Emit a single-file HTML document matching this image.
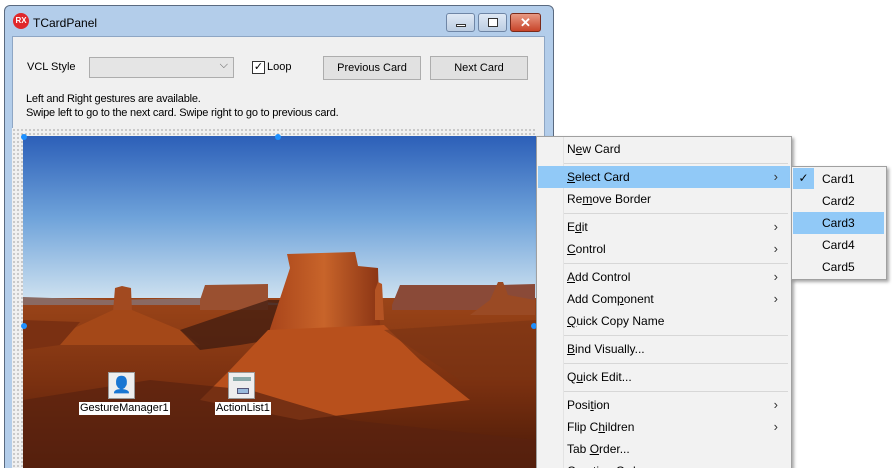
<!DOCTYPE html>
<html><head><meta charset="utf-8"><style>
*{margin:0;padding:0;box-sizing:border-box}
html,body{width:892px;height:468px;overflow:hidden}
body{background:#fff;font-family:"Liberation Sans",sans-serif;font-size:11px;color:#000;position:relative}
.abs{position:absolute}
.win{left:4px;top:5px;width:550px;height:470px;background:#b3cdea;border:1px solid #5a6a80;border-radius:6px 6px 0 0}
.title{left:33px;top:16px;font-size:12px;color:#000}
.client{left:12px;top:36px;width:533px;height:440px;background:#f0f0f0;border:1px solid #8ea6c4}
.btn{border:1px solid #adadad;background:#e1e1e1;text-align:center;line-height:22px;font-size:11px}
.menu{left:536px;top:136px;width:256px;height:340px;background:#f2f2f2;border:1px solid #a0a0a0;box-shadow:2px 2px 3px rgba(0,0,0,.35);font-size:12px}
.mi{position:absolute;left:30px;font-size:12px;height:22px;line-height:22px}
.sep{position:absolute;left:27px;right:3px;height:1px;background:#d7d7d7}
.arr{position:absolute;right:13px;font-size:13px;color:#333;line-height:22px}
.sub{left:791px;top:166px;width:96px;height:114px;background:#f2f2f2;border:1px solid #a0a0a0;box-shadow:2px 2px 3px rgba(0,0,0,.35)}
u{text-decoration:underline}
.lbl{background:#fff;font-size:11px;line-height:13px;padding:0 1px}
</style></head><body>
<div class="abs win"></div>
<div class="abs" style="left:13px;top:13px;width:16px;height:16px;border-radius:50%;background:#e0282b;color:#fff;font-size:8px;font-weight:bold;line-height:16px;text-align:center">RX</div>
<div class="abs title">TCardPanel</div>
<div class="abs" style="left:446px;top:13px;width:29px;height:19px;border:1px solid #6f86a6;border-radius:3px;background:linear-gradient(#dfe9f5,#bccde2)"><div class="abs" style="left:9px;top:10px;width:10px;height:3px;border:1px solid #333;background:#fff"></div></div>
<div class="abs" style="left:478px;top:13px;width:29px;height:19px;border:1px solid #6f86a6;border-radius:3px;background:linear-gradient(#dfe9f5,#bccde2)"><div class="abs" style="left:9px;top:4px;width:10px;height:9px;border:1px solid #333;background:#fff"></div></div>
<div class="abs" style="left:510px;top:13px;width:31px;height:19px;border:1px solid #7a2a1a;border-radius:3px;background:linear-gradient(#e89a84,#c8452a);color:#fff;font-weight:bold;font-size:13px;text-align:center;line-height:17px">✕</div>
<div class="abs client"></div>
<div class="abs" style="left:27px;top:61px">VCL Style</div>
<div class="abs" style="left:89px;top:57px;width:145px;height:21px;border:1px solid #adadad;background:#e5e5e5"><span class="abs" style="right:5px;top:1px;font-size:11px;color:#555">⌵</span></div>
<div class="abs" style="left:252px;top:61px;width:13px;height:13px;border:1px solid #333;background:#fff;font-size:11px;line-height:11px;text-align:center">✓</div>
<div class="abs" style="left:267px;top:61px">Loop</div>
<div class="abs btn" style="left:323px;top:56px;width:98px;height:24px">Previous Card</div>
<div class="abs btn" style="left:430px;top:56px;width:98px;height:24px">Next Card</div>
<div class="abs" style="left:26px;top:92px;line-height:14px;letter-spacing:-0.2px">Left and Right gestures are available.<br>Swipe left to go to the next card. Swipe right to go to previous card.</div>
<div class="abs" style="left:12px;top:128px;width:525px;height:340px;background-image:radial-gradient(#555 0.6px,transparent 0.7px);background-size:4px 4px;background-color:#f0f0f0"></div>
<svg class="abs" style="left:0;top:0" width="892" height="468">
<defs>
<linearGradient id="sky" x1="0" y1="136" x2="0" y2="300" gradientUnits="userSpaceOnUse"><stop offset="0" stop-color="#2c5fb8"/><stop offset=".5" stop-color="#6fa3da"/><stop offset="1" stop-color="#cfe2f0"/></linearGradient>
<linearGradient id="gr" x1="0" y1="300" x2="0" y2="468" gradientUnits="userSpaceOnUse"><stop offset="0" stop-color="#9a4418"/><stop offset=".5" stop-color="#7a3010"/><stop offset="1" stop-color="#4a1a08"/></linearGradient>
<linearGradient id="mesa" x1="0" y1="0" x2="1" y2="0"><stop offset="0" stop-color="#a8441a"/><stop offset=".5" stop-color="#c8642a"/><stop offset="1" stop-color="#8a3414"/></linearGradient>
</defs>
<rect x="23" y="136" width="513" height="332" fill="url(#sky)"/>
<rect x="23" y="298" width="513" height="170" fill="url(#gr)"/>
<polygon points="23,297 110,300 200,298 240,300 300,305 23,305" fill="#8a6a62"/>
<polygon points="200,300 205,285 268,284 268,310 200,310" fill="#9a5030"/>
<polygon points="392,305 400,285 500,285 535,284 535,310 392,310" fill="#8a4a38"/>
<polygon points="490,300 498,282 503,282 508,295 535,300 535,315 470,315" fill="#9a4a24"/>
<polygon points="113,312 115,288 122,286 131,288 132,312" fill="#a24a20"/>
<polygon points="70,330 113,310 132,310 180,330 200,345 40,345" fill="#a44818"/>
<polygon points="23,320 80,322 60,345 23,350" fill="#7a3012"/>
<polygon points="268,300 290,300 300,335 240,345 200,350 180,330" fill="#3a1a10" opacity=".7"/>
<polygon points="290,268 287,254 355,252 358,266 378,268 380,330 268,335" fill="url(#mesa)"/>
<polygon points="375,290 378,282 382,284 384,320 375,320" fill="#b45424"/>
<polygon points="268,330 384,325 420,360 470,400 300,420 200,400 230,370" fill="#b8501c"/>
<polygon points="23,400 150,380 250,390 350,420 536,440 536,468 23,468" fill="#5a2210" opacity=".7"/>
<polygon points="384,330 536,320 536,380 460,380" fill="#7a3414" opacity=".6"/>
<circle cx="24" cy="137" r="3" fill="#1e90ff"/><circle cx="278" cy="137" r="3" fill="#1e90ff"/><circle cx="24" cy="326" r="3" fill="#1e90ff"/><circle cx="534" cy="326" r="3" fill="#1e90ff"/>
</svg>
<div class="abs" style="left:108px;top:372px;width:27px;height:27px;border:1px solid #999;background:#eee;font-size:16px;text-align:center;line-height:25px;color:#1a4fd0">👤</div>
<div class="abs lbl" style="left:79px;top:402px">GestureManager1</div>
<div class="abs" style="left:228px;top:372px;width:27px;height:27px;border:1px solid #999;background:#eee"><div class="abs" style="left:4px;top:4px;width:18px;height:4px;background:#8aa"></div><div class="abs" style="left:8px;top:15px;width:12px;height:6px;background:#9bd;border:1px solid #557"></div></div>
<div class="abs lbl" style="left:215px;top:402px">ActionList1</div>
<div class="abs menu">
<div class="abs" style="left:26px;top:0;bottom:0;width:1px;background:#e3e3e3"></div>
<div class="mi" style="top:1px">N<u>e</u>w Card</div>
<div class="sep" style="top:26px"></div>
<div class="abs" style="left:1px;top:29px;width:252px;height:22px;background:#91c9f7"></div>
<div class="mi" style="top:29px"><u>S</u>elect Card</div><span class="arr" style="top:29px">›</span>
<div class="mi" style="top:51px">Re<u>m</u>ove Border</div>
<div class="sep" style="top:76px"></div>
<div class="mi" style="top:79px">E<u>d</u>it</div><span class="arr" style="top:79px">›</span>
<div class="mi" style="top:101px"><u>C</u>ontrol</div><span class="arr" style="top:101px">›</span>
<div class="sep" style="top:126px"></div>
<div class="mi" style="top:129px"><u>A</u>dd Control</div><span class="arr" style="top:129px">›</span>
<div class="mi" style="top:151px">Add Com<u>p</u>onent</div><span class="arr" style="top:151px">›</span>
<div class="mi" style="top:173px"><u>Q</u>uick Copy Name</div>
<div class="sep" style="top:198px"></div>
<div class="mi" style="top:201px"><u>B</u>ind Visually...</div>
<div class="sep" style="top:226px"></div>
<div class="mi" style="top:229px">Q<u>u</u>ick Edit...</div>
<div class="sep" style="top:254px"></div>
<div class="mi" style="top:257px">Posi<u>t</u>ion</div><span class="arr" style="top:257px">›</span>
<div class="mi" style="top:279px">Flip C<u>h</u>ildren</div><span class="arr" style="top:279px">›</span>
<div class="mi" style="top:301px">Tab <u>O</u>rder...</div>
<div class="mi" style="top:323px">Creation Order...</div>
</div>
<div class="abs sub">
<div class="abs" style="left:1px;top:1px;width:21px;height:21px;background:#91c9f7;text-align:center;line-height:21px;font-size:12px">✓</div>
<div class="abs" style="left:1px;top:45px;width:91px;height:22px;background:#91c9f7"></div>
<div class="mi" style="top:1px;left:30px">Card1</div>
<div class="mi" style="top:23px;left:30px">Card2</div>
<div class="mi" style="top:45px;left:30px">Card3</div>
<div class="mi" style="top:67px;left:30px">Card4</div>
<div class="mi" style="top:89px;left:30px">Card5</div>
</div>
</body></html>
